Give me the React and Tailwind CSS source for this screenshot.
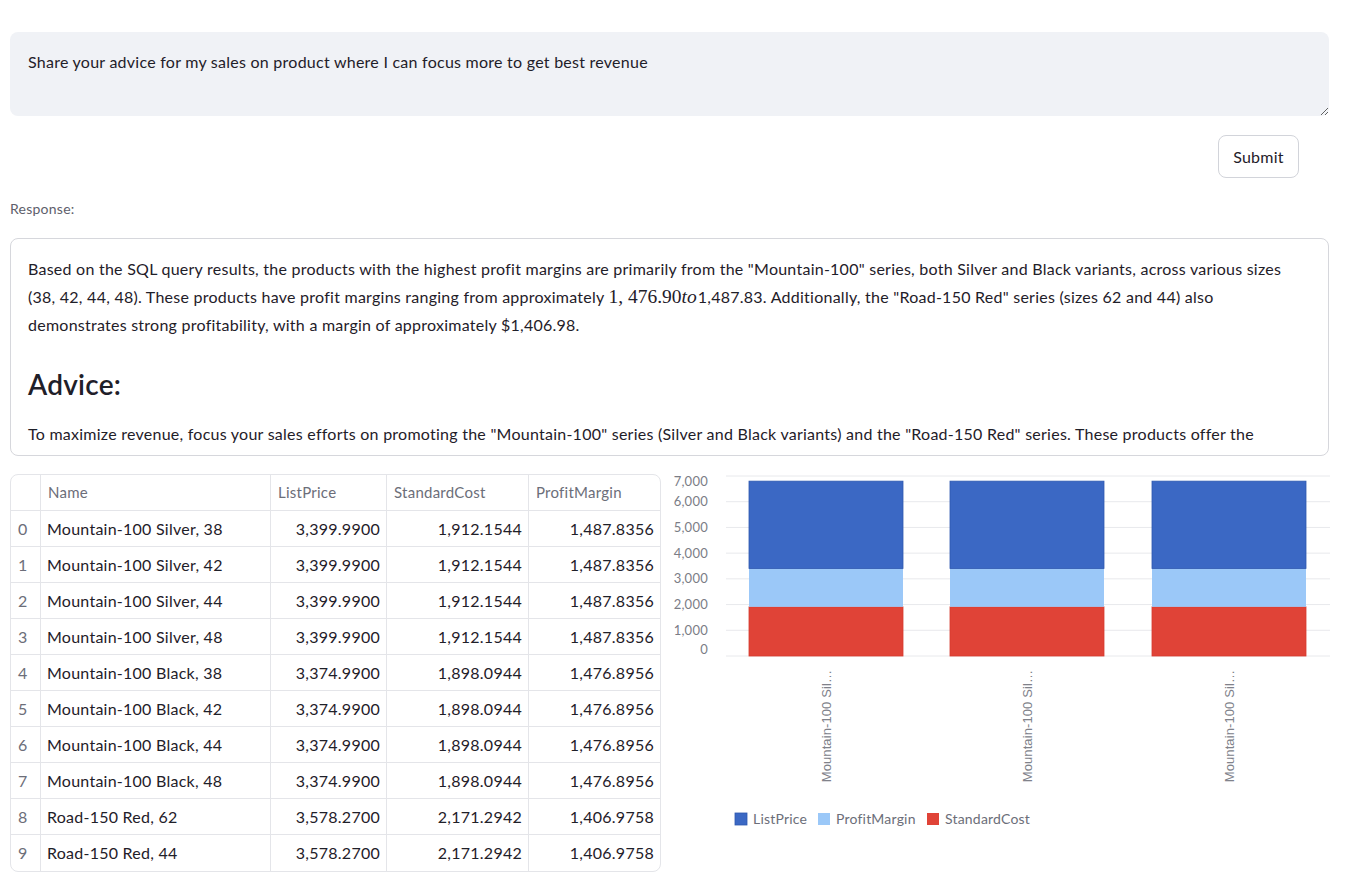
import React from 'react';

const FONT = '"Lato", "Liberation Sans", sans-serif';

const rows = [
  ['Mountain-100 Silver, 38', '3,399.9900', '1,912.1544', '1,487.8356'],
  ['Mountain-100 Silver, 42', '3,399.9900', '1,912.1544', '1,487.8356'],
  ['Mountain-100 Silver, 44', '3,399.9900', '1,912.1544', '1,487.8356'],
  ['Mountain-100 Silver, 48', '3,399.9900', '1,912.1544', '1,487.8356'],
  ['Mountain-100 Black, 38', '3,374.9900', '1,898.0944', '1,476.8956'],
  ['Mountain-100 Black, 42', '3,374.9900', '1,898.0944', '1,476.8956'],
  ['Mountain-100 Black, 44', '3,374.9900', '1,898.0944', '1,476.8956'],
  ['Mountain-100 Black, 48', '3,374.9900', '1,898.0944', '1,476.8956'],
  ['Road-150 Red, 62', '3,578.2700', '2,171.2942', '1,406.9758'],
  ['Road-150 Red, 44', '3,578.2700', '2,171.2942', '1,406.9758'],
];

// first three records, stacked StandardCost -> ProfitMargin -> ListPrice
const bars = [
  { x: 79, cost: 1912.1544, margin: 1487.8356, price: 3399.99 },
  { x: 280, cost: 1912.1544, margin: 1487.8356, price: 3399.99 },
  { x: 482, cost: 1912.1544, margin: 1487.8356, price: 3399.99 },
];

const BASE = 186;
const SCALE = 180 / 7000;

function DataTable() {
  const cols = 'grid grid-cols-[30px_230px_116px_142px_131px]';
  return (
    <div className="w-[651px] border border-[#e4e5e9] rounded-lg overflow-hidden shrink-0">
      <div className={`${cols} h-9 border-b border-[#e4e5e9] text-[15px] text-[#6c6e79]`}>
        <div className="border-r border-[#e4e5e9]" />
        <div className="border-r border-[#e4e5e9] px-[7px] flex items-center">Name</div>
        <div className="border-r border-[#e4e5e9] px-[7px] flex items-center">ListPrice</div>
        <div className="border-r border-[#e4e5e9] px-[7px] flex items-center">StandardCost</div>
        <div className="px-[7px] flex items-center">ProfitMargin</div>
      </div>
      {rows.map((r, i) => (
        <div
          key={i}
          className={`${cols} h-9 text-[16px] text-[#1f2029] ${i < rows.length - 1 ? 'border-b border-[#e4e5e9]' : ''}`}
        >
          <div className="border-r border-[#e4e5e9] px-[7px] flex items-center text-[#6c6e79]">{i}</div>
          <div className="border-r border-[#e4e5e9] px-[6px] flex items-center">{r[0]}</div>
          <div className="border-r border-[#e4e5e9] px-[6px] flex items-center justify-end">{r[1]}</div>
          <div className="border-r border-[#e4e5e9] px-[6px] flex items-center justify-end">{r[2]}</div>
          <div className="px-[6px] flex items-center justify-end">{r[3]}</div>
        </div>
      ))}
    </div>
  );
}

function StackedChart() {
  const ticks = [7000, 6000, 5000, 4000, 3000, 2000, 1000, 0];
  return (
    <svg width="660" height="370" className="block">
      {ticks.map((t, i) => {
        const y = BASE - t * SCALE;
        let ly = y + 4.5;
        if (i === 0) ly = y + 9.5;
        if (t === 0) ly = y - 2.5;
        return (
          <g key={t}>
            <line x1="56" x2="660" y1={y} y2={y} stroke="#e8e9ec" strokeWidth="1" />
            <text x="38" y={ly} textAnchor="end" fontSize="13" fill="#7b7d86" fontFamily={FONT}>
              {t.toLocaleString('en-US')}
            </text>
          </g>
        );
      })}
      {bars.map((b, i) => {
        const hc = b.cost * SCALE;
        const hm = b.margin * SCALE;
        const hp = b.price * SCALE;
        return (
          <g key={i}>
            <rect x={b.x} y={BASE - hc} width="154" height={hc} fill="#e04337" stroke="#d63a2e" strokeWidth="0.8" />
            <rect x={b.x} y={BASE - hc - hm} width="154" height={hm} fill="#9bc8f8" />
            <rect x={b.x} y={BASE - hc - hm - hp} width="154" height={hp} fill="#3b68c4" stroke="#2d58b0" strokeWidth="0.8" />
            <text
              transform={`translate(${b.x + 81.5}, 200) rotate(-90)`}
              textAnchor="end"
              fontSize="13"
              letterSpacing="0.1"
              fill="#80828a"
              fontFamily='"Liberation Sans", Arial, sans-serif'
            >
              Mountain-100 Sil…
            </text>
          </g>
        );
      })}
      <g fontFamily={FONT} fontSize="14" fill="#6c6e79" letterSpacing="0.2">
        <rect x="65" y="343" width="12" height="12" fill="#3b68c4" stroke="#2d58b0" strokeWidth="0.8" />
        <text x="83" y="354">ListPrice</text>
        <rect x="148" y="343" width="12" height="12" fill="#9bc8f8" />
        <text x="166" y="354">ProfitMargin</text>
        <rect x="257" y="343" width="12" height="12" fill="#e04337" />
        <text x="275" y="354">StandardCost</text>
      </g>
    </svg>
  );
}

export default function App() {
  return (
    <div
      className="w-[1358px] h-[888px] bg-white text-[#1f2029] overflow-hidden tracking-[0.25px]"
      style={{ fontFamily: FONT }}
    >
      <div className="w-[1319px] ml-[10px] pt-8">
        {/* prompt input */}
        <textarea
          readOnly
          defaultValue="Share your advice for my sales on product where I can focus more to get best revenue"
          className="block w-full h-[84px] rounded-lg bg-[#f0f2f6] px-[18px] py-[18px] text-[16px] leading-6 tracking-[0.25px] text-[#1f2029] outline-none resize-y"
        />

        <div className="flex justify-end pr-[30px] mt-[19px]">
          <button className="w-[81px] h-[43px] rounded-lg border border-[#d2d4da] bg-white text-[16px] tracking-[0.25px] text-[#1f2029]">
            Submit
          </button>
        </div>

        <div className="mt-[21px] text-[14px] leading-5 text-[#5e606b]">Response:</div>

        {/* answer panel */}
        <div className="mt-[19px] h-[218px] overflow-hidden rounded-lg border border-[#d6d7dc] pl-[17px] pr-[36px] pt-[16px] text-[16px] leading-7">
          <p>
            Based on the SQL query results, the products with the highest profit margins are primarily from the
            "Mountain-100" series, both Silver and Black variants, across various sizes (38, 42, 44, 48). These products
            have profit margins ranging from approximately{' '}
            <span
              className="text-[19.5px] tracking-normal mr-[1px]"
              style={{ fontFamily: '"Liberation Serif", "DejaVu Serif", serif' }}
            >
              1, 476.90<i>to</i>
            </span>
            1,487.83. Additionally, the "Road-150 Red" series (sizes 62 and 44) also demonstrates strong profitability,
            with a margin of approximately $1,406.98.
          </p>
          <h2 className="mt-[25px] text-[28px] leading-10 font-semibold">Advice:</h2>
          <p className="mt-4">
            To maximize revenue, focus your sales efforts on promoting the "Mountain-100" series (Silver and Black
            variants) and the "Road-150 Red" series. These products offer the highest profit margins per unit sold,
            making them ideal candidates for targeted campaigns, bundles and premium placement across your channels.
          </p>
        </div>

        <div className="mt-[18px] flex gap-[9px]">
          <DataTable />
          <div className="-mt-1">
            <StackedChart />
          </div>
        </div>
      </div>
    </div>
  );
}
